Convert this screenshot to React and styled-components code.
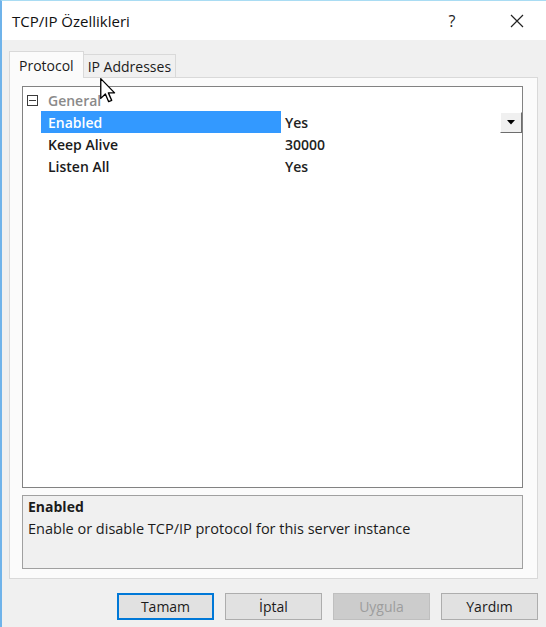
import React from 'react';
import styled, { createGlobalStyle } from 'styled-components';

const GlobalStyle = createGlobalStyle`
html, body {
  margin: 0;
  padding: 0;
  background: #ffffff;
}
* { box-sizing: border-box; }
`

const Window = styled.div`
position: relative;
width: 546px;
height: 627px;
overflow: hidden;
border-top: 1px solid #a9dcf3;
border-left: 2px solid #6fb3ea;
background: #f0f0f0;
font-family: "Open Sans", "Noto Sans", sans-serif;
font-size: 14px;
color: #1b1b1b;
`

const TitleBar = styled.div`
height: 39px;
background: #ffffff;
display: flex;
align-items: center;
padding-left: 10px;
`

const TitleText = styled.div`
flex: 1;
font-size: 15px;
color: #111;
`

const HelpGlyph = styled.div`
width: 14px;
text-align: center;
font-size: 16px;
margin-right: 45px;
color: #222;
`

const CloseButton = styled.div`
width: 26px;
height: 26px;
display: flex;
align-items: center;
justify-content: center;
margin-right: 16px;
`

const Body = styled.div`
padding: 11px 8px 0 7px;
`

const TabStrip = styled.div`
display: flex;
align-items: flex-end;
height: 27px;
position: relative;
z-index: 1;
margin-bottom: -1px;
`

const Tab = styled.div`
height: ${p => (p.active ? '27px' : '24px')};
padding: 0 ${p => (p.active ? '9px' : '4px')};
display: flex;
align-items: center;
background: ${p => (p.active ? '#fbfbfb' : '#f0f0f0')};
border: 1px solid #d9d9d9;
border-bottom: ${p => (p.active ? 'none' : '1px solid #d9d9d9')};
border-left: ${p => (p.active ? '1px solid #d9d9d9' : 'none')};
color: #1b1b1b;
`

const TabPage = styled.div`
height: 502px;
background: #fbfbfb;
border: 1px solid #d9d9d9;
padding: 8px 14px 9px 12px;
display: flex;
flex-direction: column;
gap: 7px;
`

const PropertyGrid = styled.div`
height: 402px;
background: #ffffff;
border: 1px solid #828282;
padding-top: 2px;
`

const GridRow = styled.div`
display: flex;
height: 22px;
align-items: center;
`

const MarginCell = styled.div`
width: 18px;
height: 100%;
display: flex;
align-items: center;
justify-content: center;
padding-left: 1px;
`

const CollapseBox = styled.div`
width: 11px;
height: 11px;
border: 1px solid #3c3c3c;
position: relative;
&::after {
  content: '';
  position: absolute;
  left: 1px;
  right: 1px;
  top: 4px;
  height: 1px;
  background: #3c3c3c;
}
`

const CategoryName = styled.div`
padding-left: 7px;
color: #8a8a8a;
font-weight: 600;
`

const NameCell = styled.div`
width: 240px;
height: 100%;
display: flex;
align-items: center;
padding-left: 7px;
background: ${p => (p.selected ? '#3399ff' : 'transparent')};
color: ${p => (p.selected ? '#ffffff' : '#1b1b1b')};
font-weight: 600;
`

const ValueCell = styled.div`
flex: 1;
height: 100%;
display: flex;
align-items: center;
justify-content: space-between;
padding-left: 4px;
font-weight: 600;
color: #222;
`

const DropButton = styled.div`
width: 22px;
height: 21px;
background: #f0f0f0;
border-top: 1px solid #ffffff;
border-left: 1px solid #ffffff;
border-right: 1px solid #6d6d6d;
border-bottom: 1px solid #6d6d6d;
display: flex;
align-items: center;
justify-content: center;
`

const DescriptionBox = styled.div`
height: 74px;
background: #f0f0f0;
border: 1px solid #a0a0a0;
padding: 0 5px;
line-height: 22px;
`

const DescTitle = styled.div`
font-weight: 700;
`

const DescText = styled.div`
font-size: 14.5px;
`

const ButtonBar = styled.div`
display: flex;
justify-content: flex-end;
gap: 11px;
margin-top: 14px;
`

const DialogButton = styled.div`
width: 97px;
height: 27px;
display: flex;
align-items: center;
justify-content: center;
background: ${p => (p.disabled ? '#cccccc' : '#e1e1e1')};
border: ${p => (p.primary ? '2px solid #0078d7' : p.disabled ? '1px solid #bfbfbf' : '1px solid #adadad')};
color: ${p => (p.disabled ? '#9d9d9d' : '#1b1b1b')};
`

const Cursor = styled.svg`
position: absolute;
left: 98px;
top: 77px;
z-index: 5;
`

const rows = [
  { name: 'Enabled', value: 'Yes', selected: true },
  { name: 'Keep Alive', value: '30000' },
  { name: 'Listen All', value: 'Yes' },
];

const App = () => {
  return (<>
    <GlobalStyle />
    <Window>
      <TitleBar>
        <TitleText>TCP/IP Özellikleri</TitleText>
        <HelpGlyph>?</HelpGlyph>
        <CloseButton>
          <svg width="14" height="14" viewBox="0 0 14 14">
            <path d="M1 1 L13 13 M13 1 L1 13" stroke="#222" strokeWidth="1.2" fill="none" />
          </svg>
        </CloseButton>
      </TitleBar>
      <Body>
        <TabStrip>
          <Tab active>Protocol</Tab>
          <Tab>IP Addresses</Tab>
        </TabStrip>
        <TabPage>
          <PropertyGrid>
            <GridRow>
              <MarginCell><CollapseBox /></MarginCell>
              <CategoryName>General</CategoryName>
            </GridRow>
            {rows.map((row) => (
              <GridRow key={row.name}>
                <MarginCell />
                <NameCell selected={row.selected}>{row.name}</NameCell>
                <ValueCell>
                  {row.value}
                  {row.selected && (
                    <DropButton>
                      <svg width="8" height="5" viewBox="0 0 8 5">
                        <path d="M0 0 L8 0 L4 4.5 Z" fill="#000" />
                      </svg>
                    </DropButton>
                  )}
                </ValueCell>
              </GridRow>
            ))}
          </PropertyGrid>
          <DescriptionBox>
            <DescTitle>Enabled</DescTitle>
            <DescText>Enable or disable TCP/IP protocol for this server instance</DescText>
          </DescriptionBox>
        </TabPage>
        <ButtonBar>
          <DialogButton primary>Tamam</DialogButton>
          <DialogButton>İptal</DialogButton>
          <DialogButton disabled>Uygula</DialogButton>
          <DialogButton>Yardım</DialogButton>
        </ButtonBar>
      </Body>
      <Cursor width="16" height="25" viewBox="0 0 12 19">
        <path d="M0.5 0.5 L0.5 15.5 L4 12.2 L6.5 18 L8.8 17 L6.3 11.3 L11 11.3 Z" fill="#fff" stroke="#000" strokeWidth="1" strokeLinejoin="round" />
      </Cursor>
    </Window>
  </>
  )
}

export default App;
